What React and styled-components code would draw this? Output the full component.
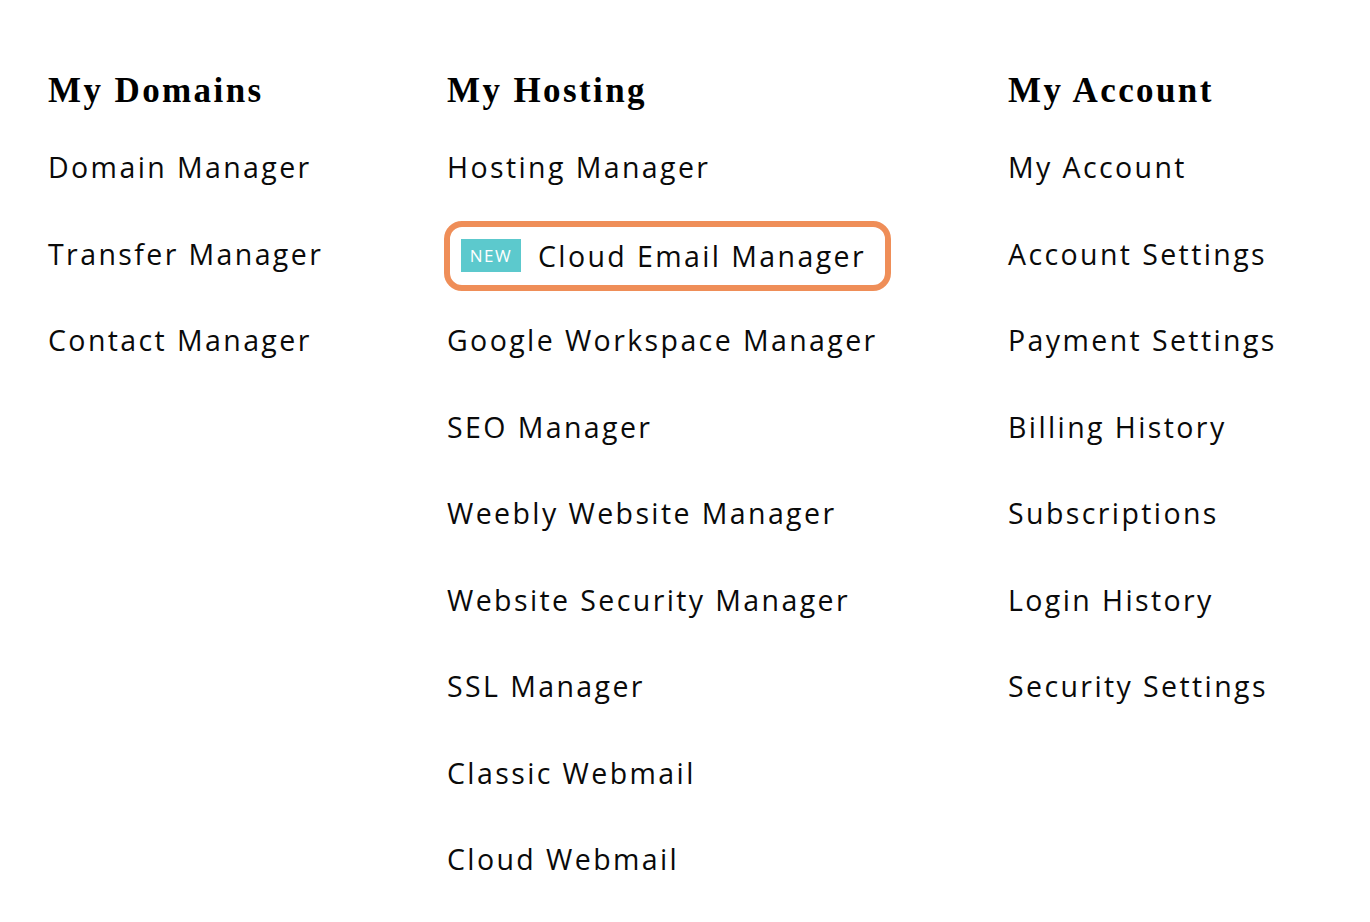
import React from "react";
import styled, { createGlobalStyle } from "styled-components";

const Global = createGlobalStyle`
  body {
    margin: 0;
    background: #ffffff;
    color: #0a0a0a;
  }
`;

const Main = styled.div`
  display: grid;
  grid-template-columns: 399px 561px 1fr;
  padding: 71px 0 0 48px;
`;

const Column = styled.div`
  display: flex;
  flex-direction: column;
`;

const Heading = styled.h2`
  margin: 0 0 12.75px;
  height: 40px;
  line-height: 40px;
  font-family: "Liberation Serif", serif;
  font-weight: 700;
  font-size: 35px;
  letter-spacing: 2.4px;
  color: #000;
`;

const Item = styled.a`
  height: 86.5px;
  display: flex;
  align-items: center;
  font-family: "Open Sans", sans-serif;
  font-size: 28.5px;
  letter-spacing: 2.4px;
  color: #0a0a0a;
  text-decoration: none;
  cursor: pointer;
`;

const Highlight = styled.div`
  box-sizing: border-box;
  height: 86.5px;
  display: flex;
  align-items: center;
  margin-left: -3px;
  padding-top: 4px;
`;

const Box = styled.a`
  display: flex;
  align-items: center;
  gap: 17px;
  height: 58px;
  padding: 0 19px 0 11px;
  border: 6px solid #ef8e58;
  border-radius: 18px;
  font-family: "Open Sans", sans-serif;
  font-size: 28.5px;
  letter-spacing: 2.4px;
  color: #0a0a0a;
  cursor: pointer;
`;

const Badge = styled.span`
  display: inline-flex;
  align-items: center;
  justify-content: center;
  width: 60px;
  height: 33px;
  background: #5cc9cd;
  color: #fff;
  font-family: "Open Sans", sans-serif;
  font-size: 17px;
  letter-spacing: 1.5px;
`;

const columns = [
  {
    title: "My Domains",
    items: ["Domain Manager", "Transfer Manager", "Contact Manager"],
  },
  {
    title: "My Hosting",
    items: [
      "Hosting Manager",
      { label: "Cloud Email Manager", isNew: true },
      "Google Workspace Manager",
      "SEO Manager",
      "Weebly Website Manager",
      "Website Security Manager",
      "SSL Manager",
      "Classic Webmail",
      "Cloud Webmail",
    ],
  },
  {
    title: "My Account",
    items: [
      "My Account",
      "Account Settings",
      "Payment Settings",
      "Billing History",
      "Subscriptions",
      "Login History",
      "Security Settings",
    ],
  },
];

export default function App() {
  return (
    <>
      <Global />
      <Main>
        {columns.map((col) => (
          <Column key={col.title}>
            <Heading>{col.title}</Heading>
            {col.items.map((item) =>
              typeof item === "string" ? (
                <Item key={item}>{item}</Item>
              ) : (
                <Highlight key={item.label}>
                  <Box>
                    <Badge>NEW</Badge>
                    {item.label}
                  </Box>
                </Highlight>
              )
            )}
          </Column>
        ))}
      </Main>
    </>
  );
}
